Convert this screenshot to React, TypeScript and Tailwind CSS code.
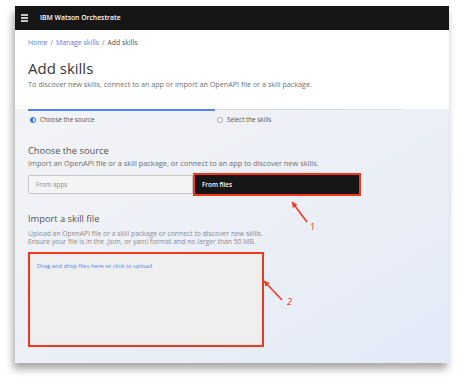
import React from "react";

const font = { fontFamily: '"Open Sans", "Noto Sans", sans-serif' };

function Arrow({ x1, y1, x2, y2 }: { x1: number; y1: number; x2: number; y2: number }) {
  // red callout arrow, head at (x2, y2)
  const a = Math.atan2(y2 - y1, x2 - x1);
  const s = 6;
  const p1 = [x2 - s * Math.cos(a - 0.5), y2 - s * Math.sin(a - 0.5)];
  const p2 = [x2 - s * Math.cos(a + 0.5), y2 - s * Math.sin(a + 0.5)];
  return (
    <g>
      <line x1={x1} y1={y1} x2={x2} y2={y2} stroke="#f5361b" strokeWidth={1.6} />
      <polygon points={`${x2},${y2} ${p1[0]},${p1[1]} ${p2[0]},${p2[1]}`} fill="#f5361b" />
    </g>
  );
}

export default function App() {
  return (
    <div className="relative h-[391px] w-[467px] overflow-hidden bg-white" style={font}>
      <div className="ml-[15px] mt-[6px] flex h-[357px] w-[434px] flex-col overflow-hidden shadow-[-2px_6px_8px_rgba(0,0,0,0.35)]">
        {/* top bar */}
        <div className="flex h-[24px] shrink-0 items-center gap-[12px] bg-[#161616] px-[6px]">
          <div className="flex flex-col gap-[1.5px]">
            <span className="block h-[1.5px] w-[7px] bg-[#c6c6c6]" />
            <span className="block h-[1.5px] w-[7px] bg-[#c6c6c6]" />
            <span className="block h-[1.5px] w-[7px] bg-[#c6c6c6]" />
          </div>
          <span className="text-[6.8px] font-semibold text-white">IBM Watson Orchestrate</span>
        </div>

        {/* page header */}
        <div className="shrink-0 bg-white px-[13px] pt-[8px]">
          <div className="flex items-center gap-[3px] text-[6.9px] leading-[10px]">
            <span className="text-[#4c7ef5]">Home</span>
            <span className="text-[#6f6f6f]">/</span>
            <span className="text-[#4c7ef5]">Manage skills</span>
            <span className="text-[#6f6f6f]">/</span>
            <span className="text-[#525252]">Add skills</span>
          </div>
          <div className="mt-[11px] text-[15px] leading-[18px] text-[#393939]">Add skills</div>
          <div className="mt-[2px] text-[7.2px] leading-[10px] text-[#6f6f6f]">
            To discover new skills, connect to an app or import an OpenAPI file or a skill package.
          </div>
          <div className="h-[20px]" />
        </div>

        {/* body */}
        <div className="flex flex-1 flex-col bg-gradient-to-br from-[#f2f3f6] via-[#eceff6] to-[#e2eaf8] px-[13px]">
          <div className="flex w-[374px]">
            <div className="flex w-[187px] flex-col">
              <div className="h-[2px] bg-[#4f84f6]" />
              <div className="flex items-center gap-[4px] pl-[2px] pt-[4px] text-[6.3px] leading-[9px] text-[#525252]">
                <span className="block h-[6px] w-[6px] rounded-full border border-[#2f6cf0] bg-[linear-gradient(90deg,#2f6cf0_50%,#fff_50%)]" />
                Choose the source
              </div>
            </div>
            <div className="flex w-[187px] flex-col">
              <div className="h-[1px] bg-[#dcdde0]" />
              <div className="flex items-center gap-[4px] pl-[2px] pt-[5px] text-[6.3px] leading-[9px] text-[#525252]">
                <span className="block h-[6px] w-[6px] rounded-full border border-[#a8a8a8] bg-white" />
                Select the skills
              </div>
            </div>
          </div>

          <div className="mt-[20px] text-[9.3px] leading-[13px] text-[#525252]">Choose the source</div>
          <div className="mt-[1px] text-[7.4px] leading-[10px] text-[#6f6f6f]">
            Import an OpenAPI file or a skill package, or connect to an app to discover new skills.
          </div>

          <div className="mt-[5px] flex h-[23px] items-center">
            <div className="flex h-[19px] w-[165px] items-center rounded-l-[2px] border border-[#c6c6c6] bg-[#f4f4f4] pl-[7px] text-[6.3px] text-[#8d8d8d]">
              From apps
            </div>
            <div className="flex h-[23px] w-[168px] items-center border-2 border-[#f5361b] bg-[#161616] pl-[7px] text-[6.3px] font-semibold text-white">
              From files
            </div>
          </div>

          <div className="mt-[16px] text-[9.3px] leading-[13px] text-[#525252]">Import a skill file</div>
          <div className="mt-[5px] text-[6.8px] leading-[8px] text-[#8d8d8d]">
            Upload an OpenAPI file or a skill package or connect to discover new skills.
            <br />
            Ensure your file is in the .json, or yaml format and no larger than 50 MB.
          </div>

          <div className="mt-[6px] h-[95px] w-[236px] border-2 border-[#f5361b] bg-[#efefef] px-[7px] pt-[8px] text-[5.9px] leading-[9px]">
            <span className="font-medium text-[#5a84f0]">Drag and drop files here or click to upload</span>
          </div>
        </div>
      </div>

      {/* callouts */}
      <svg className="pointer-events-none absolute left-0 top-0" width={467} height={391}>
        <Arrow x1={307} y1={222} x2={292} y2={202} />
        <Arrow x1={282} y1={300} x2={264} y2={281} />
      </svg>
      <span className="absolute left-[310px] top-[222px] text-[9px] leading-[10px] text-[#f5361b]">1</span>
      <span className="absolute left-[287px] top-[297px] text-[9px] italic leading-[10px] text-[#f5361b]">2</span>
    </div>
  );
}
